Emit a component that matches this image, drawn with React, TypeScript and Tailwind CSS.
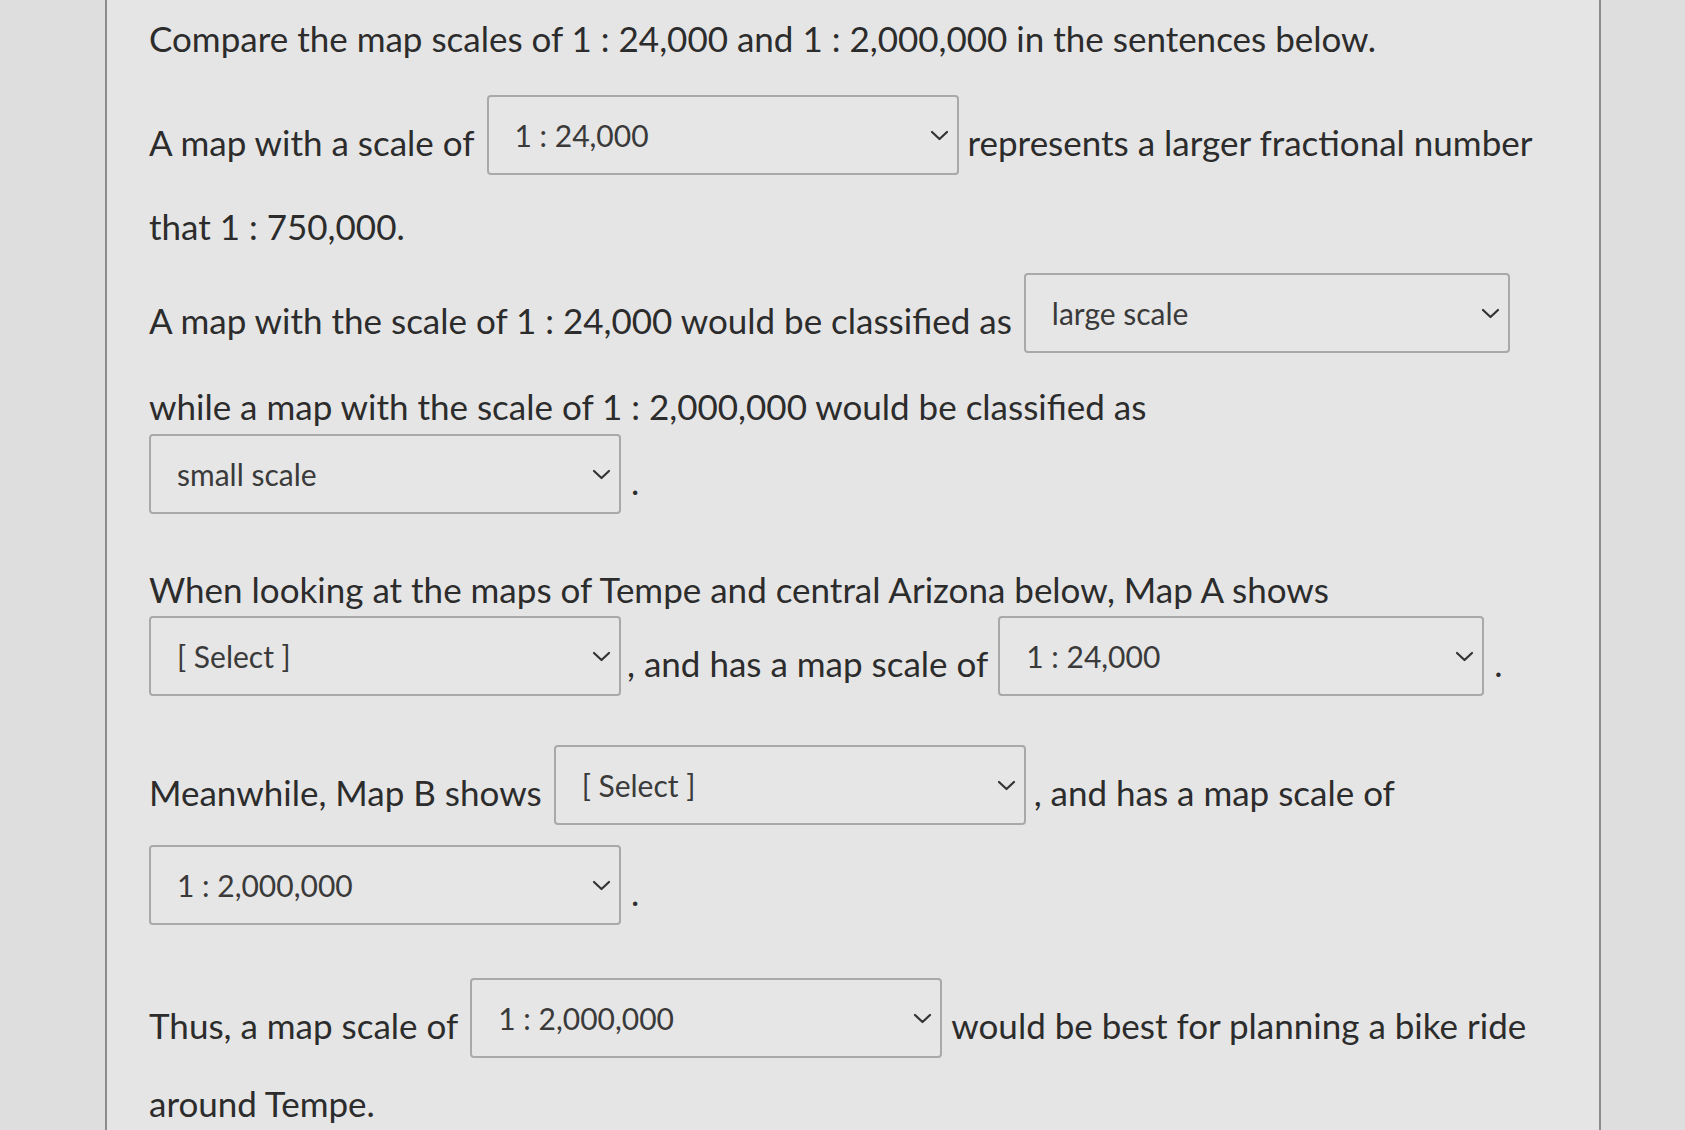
import React from 'react';

interface DropdownProps {
  value: string;
  width?: string;
}

// Canvas-style select box with a small chevron on the right
const Dropdown: React.FC<DropdownProps> = ({ value, width = 'w-[472px]' }) => {
  return (
    <div
      className={`${width} h-[80px] shrink-0 flex items-center justify-between rounded-[4px] border-2 border-[#a9a9a9] bg-[#e6e6e6] pl-[26px] pr-[8px]`}
    >
      <span className="text-[30px] text-[#3a3a3a]">{value}</span>
      <svg width="19" height="11" viewBox="0 0 19 11" fill="none">
        <path d="M2 2 L9.5 9 L17 2" stroke="#333" strokeWidth="2.2" strokeLinecap="round" strokeLinejoin="round" />
      </svg>
    </div>
  );
};

const Text: React.FC<{ children: React.ReactNode; className?: string }> = ({ children, className = '' }) => (
  <span className={`whitespace-pre mt-[14px] ${className}`}>{children}</span>
);

export default function App() {
  return (
    <div
      className="min-h-screen w-full bg-[#dedede] text-[#2c2c2c]"
      style={{ fontFamily: 'Lato, "Open Sans", sans-serif' }}
    >
      <div className="ml-[105px] w-[1496px] min-h-[1130px] border-x-2 border-[#8c8c8c] bg-[#e5e5e5] pl-[42px] pt-[18px] text-[35px]">
        {/* Heading */}
        <div className="h-[40px] flex items-center">
          Compare the map scales of 1 : 24,000 and 1 : 2,000,000 in the sentences below.
        </div>

        {/* First sentence */}
        <div className="mt-[37px] flex items-center">
          <Text className="mr-[12px]">A map with a scale of</Text>
          <Dropdown value="1 : 24,000" />
          <Text className="ml-[9px]">represents a larger fractional number</Text>
        </div>
        <div className="mt-[31px] h-[40px] flex items-center">that 1 : 750,000.</div>

        {/* Classification */}
        <div className="mt-[27px] flex items-center">
          <Text className="mr-[12px]">A map with the scale of 1 : 24,000 would be classified as</Text>
          <Dropdown value="large scale" width="w-[486px]" />
        </div>
        <div className="mt-[33px] h-[40px] flex items-center">
          while a map with the scale of 1 : 2,000,000 would be classified as
        </div>
        <div className="mt-[8px] flex items-center">
          <Dropdown value="small scale" />
          <Text className="ml-[10px]">.</Text>
        </div>

        {/* Map A */}
        <div className="mt-[55px] h-[40px] flex items-center">
          When looking at the maps of Tempe and central Arizona below, Map A shows
        </div>
        <div className="mt-[7px] flex items-center">
          <Dropdown value="[ Select ]" />
          <Text className="ml-[6px] mr-[10px]">, and has a map scale of</Text>
          <Dropdown value="1 : 24,000" width="w-[486px]" />
          <Text className="ml-[10px]">.</Text>
        </div>

        {/* Map B */}
        <div className="mt-[49px] flex items-center">
          <Text className="mr-[12px]">Meanwhile, Map B shows</Text>
          <Dropdown value="[ Select ]" />
          <Text className="ml-[8px]">, and has a map scale of</Text>
        </div>
        <div className="mt-[20px] flex items-center">
          <Dropdown value="1 : 2,000,000" />
          <Text className="ml-[10px]">.</Text>
        </div>

        {/* Conclusion */}
        <div className="mt-[53px] flex items-center">
          <Text className="mr-[12px]">Thus, a map scale of</Text>
          <Dropdown value="1 : 2,000,000" />
          <Text className="ml-[9px]">would be best for planning a bike ride</Text>
        </div>
        <div className="mt-[25px] h-[40px] flex items-center">around Tempe.</div>
      </div>
    </div>
  );
}
